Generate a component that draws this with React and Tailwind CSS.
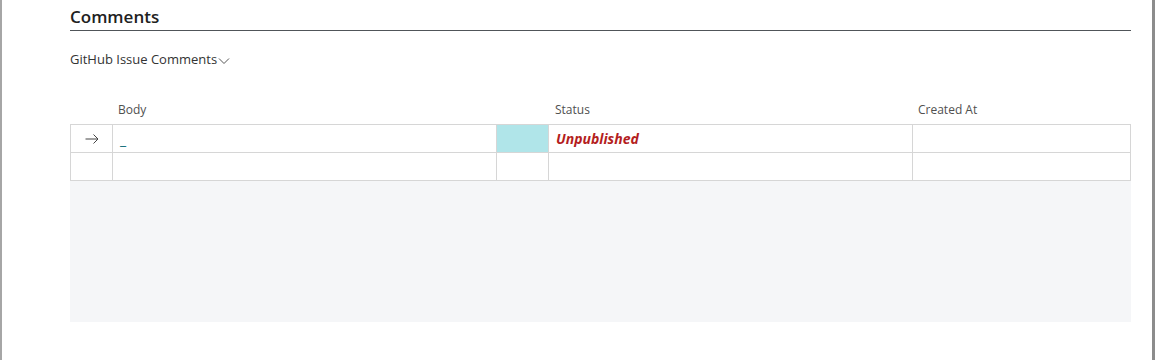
import React from "react";

export default function App() {
  const font = { fontFamily: '"Segoe UI", "Open Sans", "Noto Sans", sans-serif' };
  return (
    <div className="w-[1155px] h-[360px] bg-white flex overflow-hidden" style={font}>
      <div className="w-[2px] h-full bg-[#a6a6a6]" />
      <div className="flex-1 pl-[68px] pr-[21px] flex flex-col">
        <div className="h-[31px] border-b border-[#505559] flex items-end pb-[2px]">
          <h2 className="text-[17px] leading-[22px] font-semibold text-[#212121]">Comments</h2>
        </div>
        <div className="mt-[19px] h-[20px] flex items-center text-[13px] text-[#333333]">
          <span>GitHub Issue Comments</span>
          <svg width="12" height="8" viewBox="0 0 12 8" className="ml-[1px] mt-[1px]">
            <path d="M1 1.5 L6 6.5 L11 1.5" fill="none" stroke="#555" strokeWidth="1" />
          </svg>
        </div>
        <div className="mt-[20px] h-[34px] flex text-[12px] text-[#505050] leading-[16px]">
          <div className="w-[43px]" />
          <div className="w-[384px] pl-[5px] pt-[12px]">Body</div>
          <div className="w-[52px]" />
          <div className="w-[364px] pl-[6px] pt-[12px]">Status</div>
          <div className="flex-1 pl-[5px] pt-[12px]">Created At</div>
        </div>
        <div className="border border-[#d6d6d6] border-b-0">
          <div className="flex h-[28px] border-b border-[#d6d6d6]">
            <div className="w-[42px] border-r border-[#d6d6d6] flex items-center justify-center">
              <svg width="14" height="10" viewBox="0 0 14 10">
                <path d="M0.5 5 H13 M8.5 0.5 L13 5 L8.5 9.5" fill="none" stroke="#444" strokeWidth="1" />
              </svg>
            </div>
            <div className="w-[384px] border-r border-[#d6d6d6] pl-[7px] flex items-center text-[14px] text-[#0f6e7a] leading-none">
              <span className="mt-[2px]">_</span>
            </div>
            <div className="w-[52px] border-r border-[#d6d6d6] bg-[#b0e5e9]" />
            <div className="w-[364px] border-r border-[#d6d6d6] pl-[7px] flex items-center text-[14px] font-bold italic text-[#b41e1e]">
              Unpublished
            </div>
            <div className="flex-1" />
          </div>
          <div className="flex h-[28px] border-b border-[#d6d6d6]">
            <div className="w-[42px] border-r border-[#d6d6d6]" />
            <div className="w-[384px] border-r border-[#d6d6d6]" />
            <div className="w-[52px] border-r border-[#d6d6d6]" />
            <div className="w-[364px] border-r border-[#d6d6d6]" />
            <div className="flex-1" />
          </div>
        </div>
        <div className="h-[141px] bg-[#f5f6f8]" />
      </div>
      <div className="w-[3px] h-full bg-[#8c8c8c]" />
    </div>
  );
}
